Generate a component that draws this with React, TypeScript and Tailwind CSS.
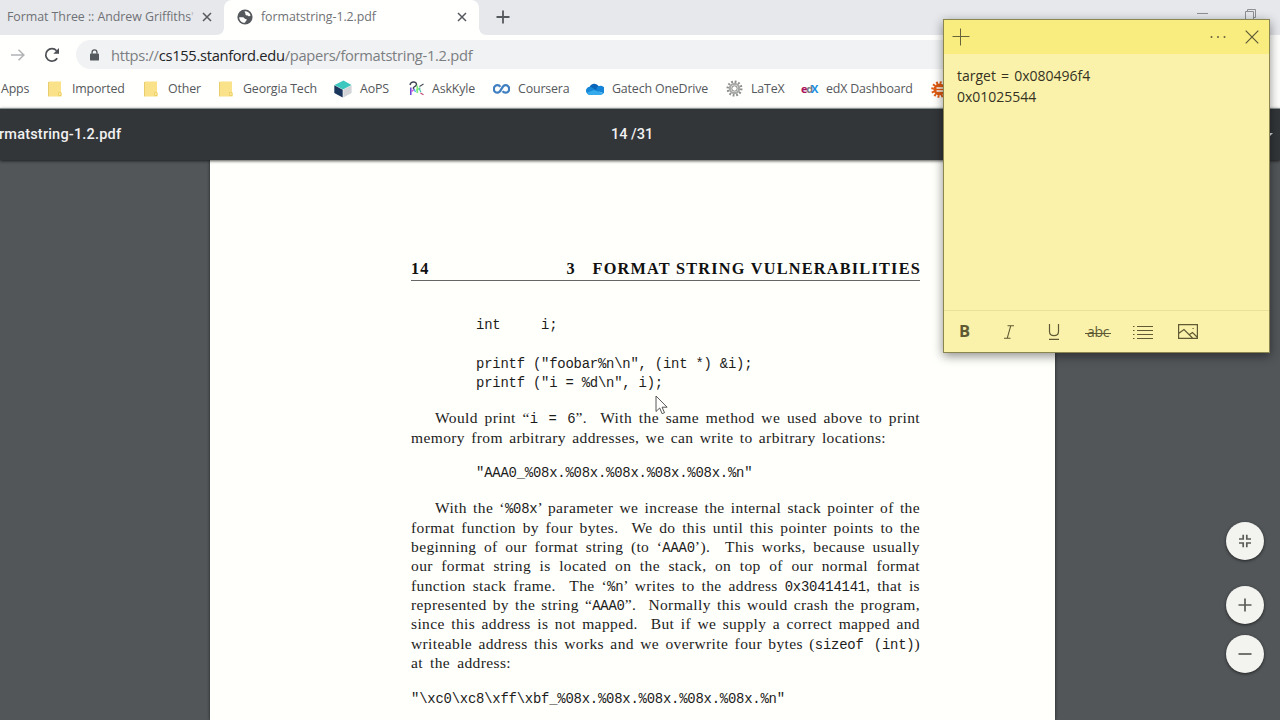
import React from "react";

const UI = "font-['Open_Sans','Noto_Sans',sans-serif]";
const MONO = "font-['Liberation_Mono',monospace]";

function CloseX({ className = "" }: { className?: string }) {
  return (
    <svg viewBox="0 0 10 10" className={"h-[10px] w-[10px] shrink-0 " + className} fill="none" stroke="#55585c" strokeWidth="1.5">
      <path d="M1 1l8 8M9 1L1 9" />
    </svg>
  );
}

function TabStrip() {
  return (
    <div className="flex h-[35px] shrink-0 bg-[#e7e8ec]">
      <div className="relative flex w-[224px] shrink-0 items-center pb-px">
        <span className="w-[195px] whitespace-nowrap pl-[7px] text-[12.4px] tracking-[-0.05px] text-[#6f7276]">
          Format Three :: Andrew Griffiths<span className="opacity-40">'</span>
        </span>
        <CloseX className="ml-[7px]" />
        <svg className="absolute bottom-0 right-0 h-[8px] w-[8px]" viewBox="0 0 8 8">
          <path d="M8 0v8H0c5 0 8-3 8-8z" fill="#fffffd" />
        </svg>
      </div>
      <div className="flex w-[255px] shrink-0 items-center rounded-t-[8px] bg-[#fffffd] pb-px pl-[13px]">
        <svg viewBox="0 0 16 16" className="h-[16px] w-[16px] shrink-0">
          <circle cx="8" cy="8" r="7.6" fill="#55585c" />
          <path d="M8 2.200c2.800 0 5 1.800 5.600 4.300-.9 1-2 .9-2.600.2-.5-.6-1.700-.2-2.300-.8-.7-.8.1-1.500-.6-2.200C7.600 3.200 7.300 2.600 8 2.200zM2.200 8.200h3.600c1.400 0 1.500 1.600 2.800 1.700 1.400.1 1.600 1.200.7 1.700-.8.4-.5 1.600-1.600 2.200-3 0-5.400-2.400-5.500-5.600z" fill="#fffffd" />
        </svg>
        <span className="ml-[8px] w-[196px] whitespace-nowrap text-[12.4px] tracking-[-0.07px] text-[#6f7276]">formatstring-1.2.pdf</span>
        <CloseX />
      </div>
      <div className="relative flex items-center pb-px pl-[17px]">
        <svg className="absolute bottom-0 left-0 h-[8px] w-[8px]" viewBox="0 0 8 8">
          <path d="M0 0v8h8C3 8 0 5 0 0z" fill="#fffffd" />
        </svg>
        <svg viewBox="0 0 14 14" className="h-[14px] w-[14px]" stroke="#55585c" strokeWidth="1.800">
          <path d="M7 .5v13M.5 7h13" />
        </svg>
      </div>
      <div className="ml-auto flex items-start pr-[23px] pt-[9px]">
        <svg viewBox="0 0 60 12" className="h-[12px] w-[60px]" fill="none" stroke="#8d8f93" strokeWidth="1">
          <path d="M0 4.500h11M48.500 2.500h8v8h-8zM50.500 2.500v-2h8v8h-2" />
        </svg>
      </div>
    </div>
  );
}

function Toolbar() {
  return (
    <div className="flex h-[39px] shrink-0 items-center bg-[#fffffd] pl-[11px]">
      <svg viewBox="0 0 14 12" className="h-[12px] w-[14px] shrink-0" fill="none" stroke="#b1b3b5" strokeWidth="1.5">
        <path d="M0 6h13M7.500 .7L12.900 6l-5.400 5.300" />
      </svg>
      <svg viewBox="0 0 16 16" className="ml-[19px] h-[16px] w-[16px] shrink-0">
        <path d="M13.200 11.200A6.200 6.200 0 1 1 12.600 3.800" fill="none" stroke="#4d5054" strokeWidth="1.700" />
        <path d="M15 .9v5.800H9.300z" fill="#4d5054" />
      </svg>
      <div className="ml-[16px] flex h-[29px] w-[1110px] items-center rounded-full bg-[#f1f2f3] pl-[14px]">
        <svg viewBox="0 0 10 13" className="h-[12px] w-[9px] shrink-0">
          <path d="M2.300 5V3.500a2.700 2.700 0 0 1 5.400 0V5" fill="none" stroke="#55585c" strokeWidth="1.500" />
          <rect x="0" y="4.700" width="10" height="8" rx="1" fill="#55585c" />
        </svg>
        <span className="ml-[12px] whitespace-nowrap pt-px text-[14.700px] tracking-[-0.3px] text-[#7b7e82]">
          https://<span className="text-[#222427]">cs155.stanford.edu</span>/papers/formatstring-1.2.pdf
        </span>
      </div>
      <div className="ml-[14px] h-[20px] w-[20px] shrink-0 -translate-x-[6px] rounded-full bg-[#c8cacc]" />
    </div>
  );
}

const Folder = () => (
  <svg viewBox="0 0 14 16" className="h-[16px] w-[14px]">
    <path d="M1 0.500h12v11l.7 1v3H1z" fill="#f9e28a" />
    <path d="M.5 1v14.500" stroke="#e9cd6c" />
    <path d="M10.500 11.500h2.500v3h-2.500z" fill="#fbeaa6" stroke="#eccb5c" strokeWidth=".8" />
  </svg>
);

const Aops = () => (
  <svg viewBox="0 0 18 18" className="h-[18px] w-[18px]">
    <path d="M9.500 .5L17.500 5 9 9.500.5 5z" fill="#3cc8bf" />
    <path d="M.3 5.300L8.700 9.800V17.500L.3 13z" fill="#1b365d" />
    <path d="M9.300 9.800l8.300-4.500V13L9.300 17.500z" fill="#d2d4d8" />
  </svg>
);

const Ask = () => (
  <svg viewBox="0 0 16 16" className="h-[16px] w-[16px]" fill="none">
    <path d="M1 4C1.500 1.500 3 .8 5 1c3 .3 3.200 3.400 1 4.300L4.500 6.500v1.500" stroke="#3e4652" strokeWidth="1.400" />
    <path d="M1.800 6.500v7.500" stroke="#6b3fd4" strokeWidth="1.500" />
    <path d="M2.500 10.500l3-2.500" stroke="#d157d2" strokeWidth="1.600" />
    <path d="M5 8l1.500 3" stroke="#41b3ee" strokeWidth="1.300" />
    <path d="M8.300 4.500v7.500M7 9.500l3-2" stroke="#7ce97b" strokeWidth="1.700" />
    <path d="M10.500 5.500l4-2.500" stroke="#49525f" strokeWidth="1.200" />
    <path d="M10.700 6.500c-.5 2.500 .3 3.500 1.300 4.500" stroke="#39b9ad" strokeWidth="1.200" />
    <path d="M11.500 12l3 1.800" stroke="#c14d79" strokeWidth="1.300" />
  </svg>
);

const Coursera = () => (
  <svg viewBox="0 0 17 10" className="h-[10px] w-[17px]" fill="none" stroke="#3f7fc1" strokeWidth="2.300">
    <path d="M7.300 2.800C6.600 1.700 5.700 1.200 4.600 1.200a3.700 3.700 0 0 0 0 7.500c3.700 0 4-7.500 7.800-7.500a3.700 3.700 0 0 1 0 7.500c-1.200 0-2.100-.6-2.800-1.600" />
  </svg>
);

const OneDrive = () => (
  <svg viewBox="0 0 18 12" className="h-[12px] w-[18px]">
    <path d="M3.500 4.500A5 5 0 0 1 12.700 3.300L15 6l-4 5H4z" fill="#0a64b8" />
    <path d="M12 3.800a4.100 4.100 0 0 1 5.500 6.500L10 7.500 11 4z" fill="#1484d8" />
    <path d="M.8 10A3.800 3.800 0 0 1 6 4.600L13 9l-2 3H4A4 4 0 0 1 .8 10z" fill="#1686d6" />
    <path d="M.8 9.800L8 7l9.600 3.300A3.600 3.600 0 0 1 14.500 12H4A4 4 0 0 1 .8 9.800z" fill="#35abec" />
  </svg>
);

const Gear = () => (
  <svg viewBox="0 0 17 17" className="h-[17px] w-[17px]" fill="none">
    <circle cx="8.500" cy="8.500" r="6.800" stroke="#8c8e8c" strokeWidth="2.400" strokeDasharray="1.800 1.760" />
    <circle cx="8.500" cy="8.500" r="4.600" stroke="#a8aaa7" strokeWidth="2.300" />
    <circle cx="8.500" cy="8.500" r="2.700" stroke="#838583" strokeWidth="1" />
  </svg>
);

const Edx = () => (
  <span className="flex h-[14px] w-[18px] items-center text-[11px] font-bold leading-none tracking-[-1.200px]">
    <span className="text-[#a8125e]">e</span>
    <span className="text-[#777b80]">d</span>
    <span className="-ml-[1px] text-[#1a8ee0]">X</span>
  </span>
);

const Burst = () => (
  <svg viewBox="0 0 17 17" className="h-[17px] w-[17px]">
    <circle cx="8.500" cy="8.500" r="7" fill="none" stroke="#df5b12" strokeWidth="2.600" strokeDasharray="1.900 1.765" />
    <circle cx="8.500" cy="8.500" r="6" fill="#df5b12" />
    <path d="M5.500 7h7M5.500 10h7" stroke="#fffffd" strokeWidth="1.300" />
  </svg>
);

const bookmarks = [
  { label: "Imported", icon: <Folder />, box: "w-[96px]", gap: "w-[24px]" },
  { label: "Other", icon: <Folder />, box: "w-[75px]", gap: "w-[24px]" },
  { label: "Georgia Tech", icon: <Folder />, box: "w-[115px]", gap: "w-[24px]" },
  { label: "AoPS", icon: <Aops />, box: "w-[75px]", gap: "w-[26px]" },
  { label: "AskKyle", icon: <Ask />, box: "w-[84px]", gap: "w-[23px]" },
  { label: "Coursera", icon: <Coursera />, box: "w-[93px]", gap: "w-[25px]" },
  { label: "Gatech OneDrive", icon: <OneDrive />, box: "w-[140px]", gap: "w-[26px]" },
  { label: "LaTeX", icon: <Gear />, box: "w-[75px]", gap: "w-[25px]" },
  { label: "edX Dashboard", icon: <Edx />, box: "w-[130px]", gap: "w-[25px]" },
];

function Bookmarks() {
  return (
    <div className="flex h-[34px] shrink-0 items-center bg-[#fffffd] pb-[4px] pl-[1px] text-[12.4px] tracking-[-0.16px] text-[#55585c]">
      <span className="w-[47px] shrink-0">Apps</span>
      {bookmarks.map((b) => (
        <div key={b.label} className={"flex shrink-0 items-center " + b.box}>
          <span className={"flex shrink-0 " + b.gap}>{b.icon}</span>
          <span className="whitespace-nowrap">{b.label}</span>
        </div>
      ))}
      <Burst />
    </div>
  );
}

function C({ children }: { children: React.ReactNode }) {
  return <span className={"text-[13.900px] tracking-[-0.21px] " + MONO}>{children}</span>;
}

function Line({ children, className = "" }: { children: React.ReactNode; className?: string }) {
  return (
    <div className={"h-[19.35px] whitespace-nowrap [text-align-last:justify] " + className}>
      {children}
    </div>
  );
}

function Code({ children, className = "" }: { children: React.ReactNode; className?: string }) {
  return <pre className={"text-[13.900px] leading-[19.35px] tracking-[-0.21px] " + MONO + " " + className}>{children}</pre>;
}

function Page() {
  return (
    <div className="ml-[210px] h-full w-[845px] bg-[#fffffb] pl-[201px] pr-[135px] text-[#1c1c1c] shadow-[0_0_3px_#222]">
      <div className="font-['Liberation_Serif',serif] text-[15.500px] leading-[19.35px] tracking-[0.38px]">
        <div className="flex h-[121px] items-end justify-between border-b border-[#666] pb-[2px] text-[16.300px] font-bold text-[#111]">
          <span className="tracking-[1px]">14</span>
          <span className="-mr-px flex tracking-[1.220px]">
            <span className="w-[26px]">3</span>FORMAT STRING VULNERABILITIES
          </span>
        </div>
        <Code className="mt-[35px] pl-[65px]">{'int     i;\n\nprintf ("foobar%n\\n", (int *) &i);\nprintf ("i = %d\\n", i);'}</Code>
        <div className="mt-[15px]">
          <Line className="pl-[24px]">Would print “<C>i&nbsp;=&nbsp;6</C>”.&nbsp; With the same method we used above to print</Line>
          <Line className="w-[475px]">memory from arbitrary addresses, we can write to arbitrary locations:</Line>
        </div>
        <Code className="mt-[17px] pl-[65px]">{'"AAA0_%08x.%08x.%08x.%08x.%08x.%n"'}</Code>
        <div className="mt-[15px]">
          <Line className="pl-[24px]">With the ‘<C>%08x</C>’ parameter we increase the internal stack pointer of the</Line>
          <Line>format function by four bytes.&nbsp; We do this until this pointer points to the</Line>
          <Line>beginning of our format string (to ‘<C>AAA0</C>’).&nbsp; This works, because usually</Line>
          <Line>our format string is located on the stack, on top of our normal format</Line>
          <Line>function stack frame.&nbsp; The ‘<C>%n</C>’ writes to the address <C>0x30414141</C>, that is</Line>
          <Line>represented by the string “<C>AAA0</C>”.&nbsp; Normally this would crash the program,</Line>
          <Line>since this address is not mapped.&nbsp; But if we supply a correct mapped and</Line>
          <Line>writeable address this works and we overwrite four bytes (<C>sizeof (int)</C>)</Line>
          <Line className="w-[100px]">at the address:</Line>
        </div>
        <Code className="mt-[17px]">{'"\\xc0\\xc8\\xff\\xbf_%08x.%08x.%08x.%08x.%08x.%n"'}</Code>
      </div>
    </div>
  );
}

function RoundButton({ d, className = "" }: { d: string; className?: string }) {
  return (
    <div className={"flex h-[38px] w-[38px] items-center justify-center rounded-full bg-[#f3f3f0] shadow-[0_1px_3px_#222] " + className}>
      <svg viewBox="0 0 14 14" className="h-[14px] w-[14px]" fill="none" stroke="#5b5b57" strokeWidth="1.700">
        <path d={d} />
      </svg>
    </div>
  );
}

function StickyNote() {
  return (
    <div className="absolute left-[943px] top-[19px] z-20 flex h-[334px] w-[327px] flex-col border border-[#8b8650] bg-[#faf2ab] shadow-[0_3px_10px_rgba(0,0,0,0.45)]">
      <div className="flex h-[34px] shrink-0 items-center bg-[#faed80] pl-[8px] pr-[10px]">
        <svg viewBox="0 0 18 18" className="h-[18px] w-[18px]" stroke="#68633b" strokeWidth="1">
          <path d="M8.500 .5v17M.5 8.500h17" />
        </svg>
        <svg viewBox="0 0 16 4" className="ml-auto mr-[19px] h-[4px] w-[16px]" fill="#68633b">
          <circle cx="1.500" cy="2" r="1" />
          <circle cx="8" cy="2" r="1" />
          <circle cx="14.500" cy="2" r="1" />
        </svg>
        <svg viewBox="0 0 14 14" className="h-[14px] w-[14px]" stroke="#5d5935" strokeWidth="1.200">
          <path d="M.7.7l12.600 12.600M13.300.7L.7 13.300" />
        </svg>
      </div>
      <div className="flex-1 px-[13px] pt-[11px] text-[14px] leading-[21px] text-[#35331f]">
        <div className="[word-spacing:1.500px]">target = 0x080496f4</div>
        <div>0x01025544</div>
      </div>
      <div className="flex h-[42px] shrink-0 items-center border-t border-[#e9e09c] pl-[15px] text-[#5f5a33]">
        <span className="w-[45px] text-[16.500px] font-bold">B</span>
        <svg viewBox="0 0 10 14" className="mr-[34px] h-[14px] w-[10px]" fill="none" stroke="#5f5a33" strokeWidth="1.100">
          <path d="M3.500.7H10M0 13.300h6.500M6.800.7L3.200 13.300" />
        </svg>
        <svg viewBox="0 0 12 16" className="mr-[26px] h-[16px] w-[12px]" fill="none" stroke="#5f5a33" strokeWidth="1.200">
          <path d="M1.500 0v7.500c0 5.500 9 5.500 9 0V0M1 15.400h10" />
        </svg>
        <span className="relative -ml-px w-[48px] text-[14px] tracking-[-0.3px]">
          <span className="pl-[2px]">abc</span>
          <span className="absolute left-0 top-[12px] h-px w-[26px] bg-[#5f5a33]" />
        </span>
        <svg viewBox="0 0 20 14" className="mr-[25px] h-[14px] w-[20px]" stroke="#5f5a33" strokeWidth="1">
          <path d="M4 1.500h16M4 5.500h16M4 9.500h16M4 13.500h16" />
          <path d="M0 1.500h1.500M0 5.500h1.500M0 9.500h1.500M0 13.500h1.500" />
        </svg>
        <svg viewBox="0 0 20 15" className="h-[15px] w-[20px]" fill="none" stroke="#5f5a33" strokeWidth="1.200">
          <path d="M.6.6h18.800v13.800H.6zM.6 9.500L6 5.500l8.500 8.500M11.500 10.500L14.500 8.500l5 5" />
          <path d="M14.500 4.500h1.200" />
        </svg>
      </div>
    </div>
  );
}

export default function App() {
  return (
    <div className={"relative flex h-[720px] w-[1280px] flex-col overflow-hidden bg-[#525659] " + UI}>
      <TabStrip />
      <Toolbar />
      <Bookmarks />
      <div className="z-10 flex h-[52px] shrink-0 items-center border-t border-[#8a9294] bg-[#323639] font-['Roboto',sans-serif] text-[14.500px] font-medium text-[#f1f1f1] shadow-[0_1px_3px_rgba(0,0,0,0.7)]">
        <span className="-ml-[1px] w-[612px] whitespace-nowrap tracking-[0.2px]">rmatstring-1.2.pdf</span>
        <span>14 /31</span>
        <svg viewBox="0 0 4 3" className="ml-auto mr-[7px] h-[3px] w-[4px]">
          <path d="M0 0h4L1 3z" fill="#ddd" />
        </svg>
      </div>
      <div className="min-h-0 flex-1">
        <Page />
      </div>
      <div className="absolute bottom-[47px] right-[16px] flex flex-col">
        <RoundButton d="M1 5h4.200V.8M13 5H8.800V.8M1 9h4.200v4.200M13 9H8.800v4.200" className="mb-[26px]" />
        <RoundButton d="M7 .5v13M.5 7h13" className="mb-[11px]" />
        <RoundButton d="M.5 7h13" />
      </div>
      <StickyNote />
      <svg viewBox="0 0 13 20" className="absolute left-[655px] top-[395px] h-[20px] w-[13px]">
        <path d="M1 1v15.500l3.700-3.500 2.400 5.700 2.400-1-2.400-5.500h5z" fill="#fffffd" stroke="#444" strokeWidth=".9" />
      </svg>
    </div>
  );
}
